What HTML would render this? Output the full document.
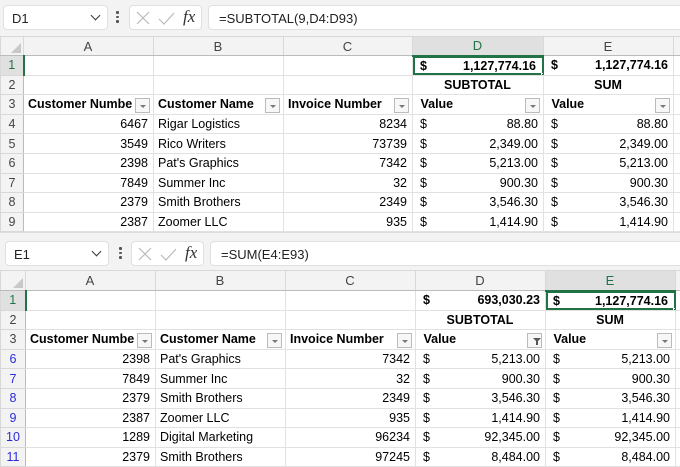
<!DOCTYPE html>
<html><head><meta charset="utf-8">
<style>
*{margin:0;padding:0;box-sizing:border-box}
body{width:680px;height:459px;overflow:hidden;background:#fff;font-family:"Liberation Sans",Arial,sans-serif;font-size:12.5px;color:#000;position:relative}
.bar{position:absolute;left:0;width:680px;background:#f3f3f3}
.box{position:absolute;background:#fff;border:1px solid #e0e0e0;border-radius:4px;font-size:13px;color:#222}
.nb{padding:5px 8px}
.chev{position:absolute;right:8px;top:6px;width:7px;height:7px;border-right:1.6px solid #333;border-bottom:1.6px solid #333;transform:rotate(45deg)}
.dots{position:absolute;width:3px;font-size:0}
.dots i{display:block;width:2.5px;height:2.5px;background:#555;margin-bottom:2px;border-radius:1px}
.fx{position:absolute;font-family:"Liberation Serif",serif;font-style:italic;font-size:17px;color:#333}
table{position:absolute;left:0;border-collapse:collapse;table-layout:fixed}
td{border:1px solid #e1e1e1;padding:0 5px 0 4px;white-space:nowrap;overflow:hidden;position:relative}
tr.h td{background:#f3f3f3;text-align:center;color:#444;font-size:13px;border-color:#d8d8d8;border-bottom:1px solid #bbb}
td.rh{background:#f3f3f3;text-align:center;color:#444;border-color:#d8d8d8;border-right:1px solid #bbb;padding:0}
td.r{text-align:right}
td.b{font-weight:bold}
td.c{text-align:center;font-weight:bold}
.m{display:flex;justify-content:space-between;padding-left:3px}
.f{position:absolute;right:3px;top:3px;width:15px;height:15px;border:1px solid #bbb;background:#f7f7f7}
.f:after{content:"";position:absolute;left:4px;top:6px;border-left:3px solid transparent;border-right:3px solid transparent;border-top:3px solid #777}
.ff:after{display:none}
.ff:before{content:"";position:absolute;left:5px;top:4px;border-left:4px solid transparent;border-right:4px solid transparent;border-top:4px solid #555}
.ff i{position:absolute;left:8px;top:7px;width:2px;height:4px;background:#555}
.sel{outline:2px solid #217346;outline-offset:-2px;padding-right:7px}
.hs{background:#e0e0e0 !important;color:#217346 !important;border-bottom:2px solid #217346 !important}
.rs{background:#e0e0e0 !important;color:#217346 !important;border-right:2px solid #217346 !important}
.blue{color:#2b2bd8 !important}
.hdl{position:absolute;width:5px;height:5px;background:#217346;border:1px solid #fff}
.corner{position:absolute;width:0;height:0;border-left:10px solid transparent;border-bottom:10px solid #c8c8c8}
</style></head><body>

<div class="bar" style="top:0;height:36px"></div>
<div class="box nb" style="left:3px;top:5px;width:105px;height:25px">D1<span class="chev"></span></div>
<div class="dots" style="left:116px;top:11px"><i></i><i></i><i></i></div>
<div class="box" style="left:129px;top:5px;width:73px;height:25px">
<svg width="73" height="25" style="position:absolute;left:0;top:0"><path d="M7 6L19 18M19 6L7 18" stroke="#bbb" stroke-width="1.2" fill="none"/><path d="M29 13L34 18L44 7" stroke="#bbb" stroke-width="1.2" fill="none"/></svg>
<span class="fx" style="left:53px;top:1px">fx</span></div>
<div class="box nb" style="left:208px;top:5px;width:480px;height:25px;padding-left:10px">=SUBTOTAL(9,D4:D93)</div>

<table style="top:36px;width:687px">
<colgroup><col style="width:23px"><col style="width:130px"><col style="width:130px"><col style="width:129px"><col style="width:131px"><col style="width:130px"><col style="width:14px"></colgroup>
<tr class="h" style="height:19px"><td><span class="corner" style="right:2px;bottom:2px"></span></td><td>A</td><td>B</td><td>C</td><td class="hs">D</td><td>E</td><td></td></tr>
<tr style="height:19.6px"><td class="rh rs">1</td><td></td><td></td><td></td><td class="b sel"><div class="m"><span>$</span><span>1,127,774.16</span></div><span class="hdl" style="right:-3px;bottom:-3px"></span></td><td class="b"><div class="m"><span>$</span><span>1,127,774.16</span></div></td><td></td></tr>
<tr style="height:19.6px"><td class="rh">2</td><td></td><td></td><td></td><td class="c">SUBTOTAL</td><td class="c">SUM</td><td></td></tr>
<tr style="height:19.6px"><td class="rh">3</td><td class="b">Customer Numbe<span class="f"></span></td><td class="b">Customer Name<span class="f"></span></td><td class="b">Invoice Number<span class="f"></span></td><td class="b">&nbsp;Value<span class="f"></span></td><td class="b">&nbsp;Value<span class="f"></span></td><td></td></tr>
<tr style="height:19.6px"><td class="rh">4</td><td class="r">6467</td><td>Rigar Logistics</td><td class="r">8234</td><td><div class="m"><span>$</span><span>88.80</span></div></td><td><div class="m"><span>$</span><span>88.80</span></div></td><td></td></tr>
<tr style="height:19.6px"><td class="rh">5</td><td class="r">3549</td><td>Rico Writers</td><td class="r">73739</td><td><div class="m"><span>$</span><span>2,349.00</span></div></td><td><div class="m"><span>$</span><span>2,349.00</span></div></td><td></td></tr>
<tr style="height:19.6px"><td class="rh">6</td><td class="r">2398</td><td>Pat's Graphics</td><td class="r">7342</td><td><div class="m"><span>$</span><span>5,213.00</span></div></td><td><div class="m"><span>$</span><span>5,213.00</span></div></td><td></td></tr>
<tr style="height:19.6px"><td class="rh">7</td><td class="r">7849</td><td>Summer Inc</td><td class="r">32</td><td><div class="m"><span>$</span><span>900.30</span></div></td><td><div class="m"><span>$</span><span>900.30</span></div></td><td></td></tr>
<tr style="height:19.6px"><td class="rh">8</td><td class="r">2379</td><td>Smith Brothers</td><td class="r">2349</td><td><div class="m"><span>$</span><span>3,546.30</span></div></td><td><div class="m"><span>$</span><span>3,546.30</span></div></td><td></td></tr>
<tr style="height:19.6px"><td class="rh">9</td><td class="r">2387</td><td>Zoomer LLC</td><td class="r">935</td><td><div class="m"><span>$</span><span>1,414.90</span></div></td><td><div class="m"><span>$</span><span>1,414.90</span></div></td><td></td></tr>
</table>

<div class="bar" style="top:232px;height:38px;border-top:1px solid #ddd"></div>
<div class="box nb" style="left:5px;top:241px;width:104px;height:25px">E1<span class="chev"></span></div>
<div class="dots" style="left:119px;top:247px"><i></i><i></i><i></i></div>
<div class="box" style="left:131px;top:241px;width:73px;height:25px">
<svg width="73" height="25" style="position:absolute;left:0;top:0"><path d="M7 6L19 18M19 6L7 18" stroke="#bbb" stroke-width="1.2" fill="none"/><path d="M29 13L34 18L44 7" stroke="#bbb" stroke-width="1.2" fill="none"/></svg>
<span class="fx" style="left:53px;top:1px">fx</span></div>
<div class="box nb" style="left:210px;top:241px;width:480px;height:25px;padding-left:10px">=SUM(E4:E93)</div>

<table style="top:270px;width:690px">
<colgroup><col style="width:25px"><col style="width:130px"><col style="width:130px"><col style="width:130px"><col style="width:130px"><col style="width:130px"><col style="width:15px"></colgroup>
<tr class="h" style="height:20px"><td><span class="corner" style="right:2px;bottom:2px"></span></td><td>A</td><td>B</td><td>C</td><td>D</td><td class="hs">E</td><td></td></tr>
<tr style="height:19.6px"><td class="rh rs">1</td><td></td><td></td><td></td><td class="b"><div class="m"><span>$</span><span>693,030.23</span></div></td><td class="b sel"><div class="m"><span>$</span><span>1,127,774.16</span></div><span class="hdl" style="right:-3px;bottom:-3px"></span></td><td></td></tr>
<tr style="height:19.6px"><td class="rh">2</td><td></td><td></td><td></td><td class="c">SUBTOTAL</td><td class="c">SUM</td><td></td></tr>
<tr style="height:19.6px"><td class="rh">3</td><td class="b">Customer Numbe<span class="f"></span></td><td class="b">Customer Name<span class="f"></span></td><td class="b">Invoice Number<span class="f"></span></td><td class="b">&nbsp;Value<span class="f ff"><i></i></span></td><td class="b">&nbsp;Value<span class="f"></span></td><td></td></tr>
<tr style="height:19.6px"><td class="rh blue">6</td><td class="r">2398</td><td>Pat's Graphics</td><td class="r">7342</td><td><div class="m"><span>$</span><span>5,213.00</span></div></td><td><div class="m"><span>$</span><span>5,213.00</span></div></td><td></td></tr>
<tr style="height:19.6px"><td class="rh blue">7</td><td class="r">7849</td><td>Summer Inc</td><td class="r">32</td><td><div class="m"><span>$</span><span>900.30</span></div></td><td><div class="m"><span>$</span><span>900.30</span></div></td><td></td></tr>
<tr style="height:19.6px"><td class="rh blue">8</td><td class="r">2379</td><td>Smith Brothers</td><td class="r">2349</td><td><div class="m"><span>$</span><span>3,546.30</span></div></td><td><div class="m"><span>$</span><span>3,546.30</span></div></td><td></td></tr>
<tr style="height:19.6px"><td class="rh blue">9</td><td class="r">2387</td><td>Zoomer LLC</td><td class="r">935</td><td><div class="m"><span>$</span><span>1,414.90</span></div></td><td><div class="m"><span>$</span><span>1,414.90</span></div></td><td></td></tr>
<tr style="height:19.6px"><td class="rh blue">10</td><td class="r">1289</td><td>Digital Marketing</td><td class="r">96234</td><td><div class="m"><span>$</span><span>92,345.00</span></div></td><td><div class="m"><span>$</span><span>92,345.00</span></div></td><td></td></tr>
<tr style="height:19.6px"><td class="rh blue">11</td><td class="r">2379</td><td>Smith Brothers</td><td class="r">97245</td><td><div class="m"><span>$</span><span>8,484.00</span></div></td><td><div class="m"><span>$</span><span>8,484.00</span></div></td><td></td></tr>
</table>
</body></html>
